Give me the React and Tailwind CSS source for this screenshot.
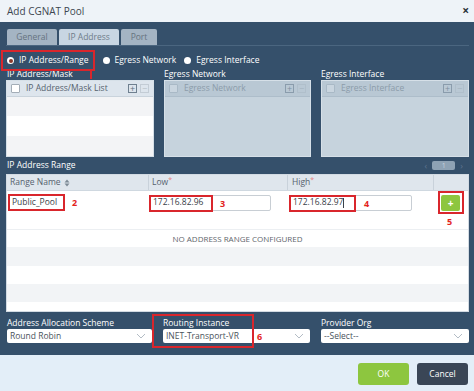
import React from 'react';

function Check({ disabled }) {
  return (
    <span
      className={
        disabled
          ? 'w-[9px] h-[9px] border border-[#a9b9c6] bg-[#c9d5df] rounded-[1px] shrink-0'
          : 'w-[9px] h-[9px] border border-[#a3adb7] bg-white rounded-[1px] shrink-0'
      }
    />
  );
}

function PlusMinus({ disabled }) {
  return (
    <div className="flex items-center gap-[3px]">
      <span
        className={
          disabled
            ? 'w-[9px] h-[9px] border border-[#8a9cac] text-[#7f91a1] flex items-center justify-center text-[9px] leading-none'
            : 'w-[9px] h-[9px] border border-[#6f8090] text-[#5e6e7e] flex items-center justify-center text-[9px] leading-none'
        }
      >
        +
      </span>
      <span
        className={
          disabled
            ? 'w-[9px] h-[9px] border border-[#b0bfcb] text-[#a5b4c0] flex items-center justify-center text-[9px] leading-none'
            : 'w-[9px] h-[9px] border border-[#c3ccd5] text-[#b5bec7] flex items-center justify-center text-[9px] leading-none'
        }
      >
        −
      </span>
    </div>
  );
}

function ListBox({ title, disabled }) {
  return (
    <div
      className={
        disabled
          ? 'h-[77px] border border-[#d6e0e8] bg-[#c6d3dd] flex flex-col'
          : 'h-[77px] border border-[#d6e0e8] bg-white flex flex-col'
      }
    >
      <div
        className={
          disabled
            ? 'h-[16px] shrink-0 flex items-center pl-[4px] pr-[4px] gap-[6px] bg-[#b9c8d4] border-b border-[#adbdca]'
            : 'h-[16px] shrink-0 flex items-center pl-[4px] pr-[4px] gap-[6px] bg-[#dde5ed] border-b border-[#c9d3dc]'
        }
      >
        <Check disabled={disabled} />
        <span className={disabled ? 'flex-1 text-[8.5px] text-[#8c9caa]' : 'flex-1 text-[8.5px] text-[#56626e]'}>
          {title}
        </span>
        <PlusMinus disabled={disabled} />
      </div>
      {!disabled && (
        <div className="flex-1 flex flex-col">
          <div className="h-[19px] bg-[#f3f4f6]" />
          <div className="h-[20px] bg-white" />
          <div className="flex-1 bg-[#f3f4f6]" />
        </div>
      )}
    </div>
  );
}

function Chevron() {
  return (
    <svg width="10" height="6" viewBox="0 0 10 6">
      <path d="M1 1l4 4 4-4" fill="none" stroke="#b3bcc5" strokeWidth="1" />
    </svg>
  );
}

function Select({ value }) {
  return (
    <div className="h-[14px] bg-white rounded-[2px] flex items-center justify-between pl-[3px] pr-[6px]">
      <span className="text-[8.5px] text-[#4a535c]">{value}</span>
      <Chevron />
    </div>
  );
}

function Radio({ checked, label }) {
  return (
    <div className="flex items-center gap-[5px]">
      <span className="w-[7px] h-[7px] rounded-full bg-white flex items-center justify-center">
        {checked && <span className="w-[4px] h-[4px] rounded-full bg-[#8b3a2c]" />}
      </span>
      <span className="text-[8.5px] text-white">{label}</span>
    </div>
  );
}

// red step number laid over the screenshot
function Num({ className, children }) {
  return (
    <span className={'absolute flex leading-none text-[9px] font-bold text-[#e3231c] ' + className}>{children}</span>
  );
}

export default function App() {
  return (
    <div className="w-[474px] h-[391px] flex flex-col font-['Open_Sans',sans-serif] overflow-hidden">
      <div className="h-[22px] shrink-0 bg-[#eef3f8] flex items-center justify-between pl-[7px] pr-[5px]">
        <span className="text-[10px] text-[#3d4650]">Add CGNAT Pool</span>
        <span className="text-[12px] font-bold text-[#2d333a] leading-none">×</span>
      </div>

      <div className="h-[333px] shrink-0 bg-[#35506b] flex flex-col pl-[6px] pr-[5px]">
        <div className="mt-[7px] h-[17px] shrink-0 flex items-end gap-[2px] border-b border-[#4b6680] pl-[1px]">
          <div className="w-[50px] h-[16px] bg-[#a4b4c3] rounded-t-[2px] flex items-center justify-center text-[8.5px] text-[#66737f]">
            General
          </div>
          <div className="w-[60px] h-[16px] bg-[#c8d6e3] rounded-t-[2px] flex items-center justify-center text-[8.5px] text-[#6f7d8a]">
            IP Address
          </div>
          <div className="w-[36px] h-[16px] bg-[#a4b4c3] rounded-t-[2px] flex items-center justify-center text-[8.5px] text-[#66737f]">
            Port
          </div>
        </div>

        <div className="mt-[4px] h-[21px] shrink-0 flex items-center gap-[8px]">
          <div className="-ml-[5px] h-[21px] border-2 border-[#d9262c] flex items-center pl-[4px] pr-[4px] relative">
            <Radio checked label="IP Address/Range" />
            <span className="absolute left-[87px] top-[19px] w-[2px] h-[8px] bg-[#d9262c]" />
          </div>
          <Radio label="Egress Network" />
          <Radio label="Egress Interface" />
        </div>

        <div className="-mt-[2px] h-[11px] shrink-0 grid grid-cols-[148px_147px_148px] gap-x-[10px] items-center text-[8.5px] text-white leading-none">
          <span className="pl-[1px]">IP Address/Mask</span>
          <span>Egress Network</span>
          <span>Egress Interface</span>
        </div>

        <div className="grid grid-cols-[148px_147px_148px] gap-x-[10px] shrink-0">
          <ListBox title="IP Address/Mask List" />
          <ListBox title="Egress Network" disabled />
          <ListBox title="Egress Interface" disabled />
        </div>

        <div className="h-[17px] shrink-0 flex items-center justify-between pr-[6px]">
          <span className="pl-[1px] text-[8.5px] text-white">IP Address Range</span>
          <div className="flex items-center gap-[5px]">
            <span className="text-[9px] text-[#5d7490] leading-none">‹</span>
            <span className="w-[23px] h-[9px] bg-[#8ea2b4] rounded-[2px] flex items-center justify-center text-[7px] text-[#c7d3de] leading-none">
              1
            </span>
            <span className="text-[9px] text-[#5d7490] leading-none">›</span>
          </div>
        </div>

        <div className="h-[138px] shrink-0 bg-white border border-[#d3dbe3] flex flex-col">
          <div className="h-[16px] shrink-0 bg-[#dfe6ed] grid grid-cols-[141px_139px_146px_1fr] border-b border-[#cfd8e0]">
            <div className="flex items-center pl-[3px] gap-[3px] text-[8.5px] text-[#56626e]">
              Range Name
              <svg width="6" height="8" viewBox="0 0 6 8">
                <path d="M3 0.5L5.5 3.5H0.5Z" fill="#7d8a96" />
                <path d="M3 7.5L5.5 4.5H0.5Z" fill="#7d8a96" />
              </svg>
            </div>
            <div className="flex items-center pl-[3px] border-l border-[#c9d2db] text-[8.5px] text-[#56626e]">
              Low<span className="text-[#e88080] text-[7px] -mt-[4px]">*</span>
            </div>
            <div className="flex items-center pl-[4px] border-l border-[#c9d2db] text-[8.5px] text-[#56626e]">
              High<span className="text-[#e88080] text-[7px] -mt-[4px]">*</span>
            </div>
            <div className="border-l border-[#c9d2db]" />
          </div>

          <div className="h-[22px] shrink-0 grid grid-cols-[141px_139px_146px_1fr] items-center">
            <div className="flex items-center pl-[1px] relative">
              <div className="w-[57px] h-[17px] border-2 border-[#d9262c] flex items-center pl-[2px] text-[8.5px] text-[#3a4149]">
                Public_Pool
              </div>
              <Num className="left-[65px] top-[4px]">2</Num>
            </div>
            <div className="flex items-center pl-[1px]">
              <div className="w-[122px] h-[16px] border border-[#c8ced4] rounded-[2px] flex items-center relative">
                <div className="absolute -left-[1px] -top-[1px] w-[64px] h-[17px] border-2 border-[#d9262c]" />
                <span className="pl-[3px] text-[8.5px] text-[#3a4149]">172.16.82.96</span>
                <Num className="left-[70px] top-[3px]">3</Num>
              </div>
            </div>
            <div className="flex items-center pl-[2px]">
              <div className="w-[123px] h-[16px] border border-[#c8ced4] rounded-[2px] flex items-center relative">
                <div className="absolute -left-[1px] -top-[1px] w-[67px] h-[17px] border-2 border-[#d9262c]" />
                <span className="pl-[3px] text-[8.5px] text-[#3a4149]">172.16.82.97</span>
                <span className="w-px h-[10px] bg-[#3a4149]" />
                <Num className="left-[74px] top-[3px]">4</Num>
              </div>
            </div>
            <div className="flex items-center justify-center relative">
              <div className="w-[26px] h-[23px] border-2 border-[#d9262c] flex items-center justify-center">
                <div className="w-[19px] h-[16px] bg-[#8dc63f] rounded-[2px] flex items-center justify-center text-white text-[10px] leading-none font-bold">
                  +
                </div>
              </div>
              <Num className="left-[14px] top-[26px]">5</Num>
            </div>
          </div>

          <div className="h-[16px] shrink-0" />
          <div className="h-[18px] shrink-0 flex items-center justify-center text-[8px] text-[#5f666d] border-t border-[#eceff2]">
            NO ADDRESS RANGE CONFIGURED
          </div>
          <div className="h-[19px] shrink-0 bg-[#f2f4f6]" />
          <div className="h-[18px] shrink-0 bg-white" />
          <div className="h-[18px] shrink-0 bg-[#f2f4f6]" />
          <div className="flex-1 bg-white" />
        </div>

        <div className="mt-[5px] grid grid-cols-[146px_147px_148px] gap-x-[11px] shrink-0">
          <div className="flex flex-col pl-[1px]">
            <span className="h-[12px] flex items-center text-[8.5px] text-white">Address Allocation Scheme</span>
            <Select value="Round Robin" />
          </div>
          <div className="flex flex-col relative">
            <span className="h-[12px] flex items-center text-[8.5px] text-white">Routing Instance</span>
            <Select value="INET-Transport-VR" />
            <div className="absolute -left-[11px] -top-[3px] w-[102px] h-[34px] border-2 border-[#d9262c]" />
            <Num className="left-[94px] top-[15px]">6</Num>
          </div>
          <div className="flex flex-col">
            <span className="h-[12px] flex items-center text-[8.5px] text-white">Provider Org</span>
            <Select value="--Select--" />
          </div>
        </div>
      </div>

      <div className="flex-1 bg-[#e3eef8] flex items-start justify-end gap-[8px] pt-[8px] pr-[6px]">
        <div className="w-[51px] h-[22px] bg-[#8dc63f] rounded-[3px] flex items-center justify-center text-[8.5px] text-white">
          OK
        </div>
        <div className="w-[51px] h-[22px] bg-[#3a4656] rounded-[3px] flex items-center justify-center text-[8.5px] text-white">
          Cancel
        </div>
      </div>
    </div>
  );
}
